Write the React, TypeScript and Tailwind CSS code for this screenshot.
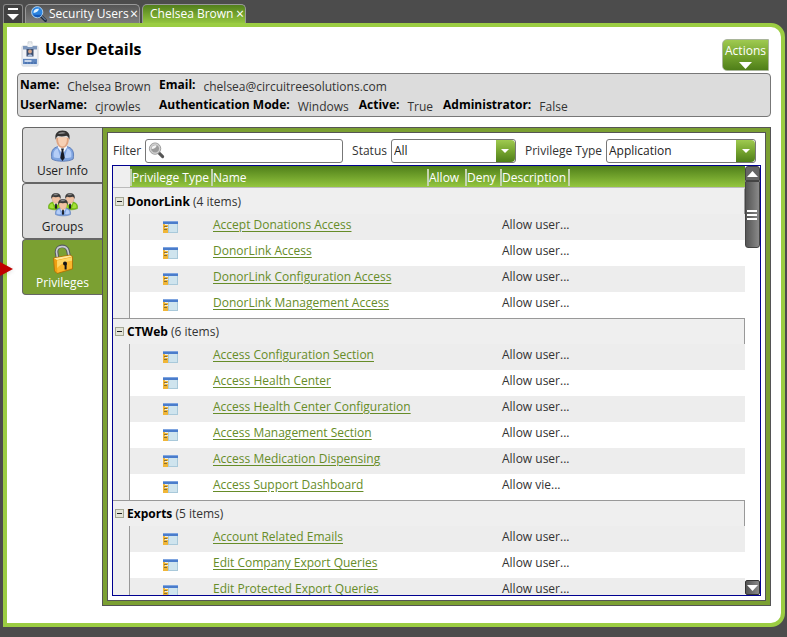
import { useState, type ReactNode } from "react";

type Group = { name: string; count: number; items: [string, string][] };

const groups: Group[] = [
  {
    name: "DonorLink",
    count: 4,
    items: [
      ["Accept Donations Access", "Allow user..."],
      ["DonorLink Access", "Allow user..."],
      ["DonorLink Configuration Access", "Allow user..."],
      ["DonorLink Management Access", "Allow user..."],
    ],
  },
  {
    name: "CTWeb",
    count: 6,
    items: [
      ["Access Configuration Section", "Allow user..."],
      ["Access Health Center", "Allow user..."],
      ["Access Health Center Configuration", "Allow user..."],
      ["Access Management Section", "Allow user..."],
      ["Access Medication Dispensing", "Allow user..."],
      ["Access Support Dashboard", "Allow vie..."],
    ],
  },
  {
    name: "Exports",
    count: 5,
    items: [
      ["Account Related Emails", "Allow user..."],
      ["Edit Company Export Queries", "Allow user..."],
      ["Edit Protected Export Queries", "Allow user..."],
    ],
  },
];

function BlueLens() {
  return (
    <svg className="shrink-0" width="16" height="16" viewBox="0 0 16 16" aria-hidden="true">
      <path d="M10 10l4.500 4.500" stroke="#1e2c40" strokeWidth="3" strokeLinecap="round" />
      <path d="M10 9.500l4.500 4.500" stroke="#8fa6bf" strokeWidth="1" strokeLinecap="round" />
      <circle cx="6.200" cy="6.200" r="5.600" fill="#2b84e0" stroke="#bcd9f3" strokeWidth=".9" />
      <path d="M2 8.500a5 5 0 0 0 8.500.5C8 8.500 5 9 2 8.500z" fill="#1557b5" />
      <path d="M2.500 7c-.3-3 2-4.800 5.500-4.200-.6 2.400-2.600 3.900-5.500 4.200z" fill="#dff3ff" />
    </svg>
  );
}

function GrayLens() {
  return (
    <svg className="shrink-0" width="17" height="17" viewBox="0 0 18 18" aria-hidden="true">
      <path d="M11 11l4.500 4.500" stroke="#555" strokeWidth="3.200" strokeLinecap="round" />
      <circle cx="7.500" cy="7" r="6" fill="#c9c9c9" stroke="#9a9a9a" strokeWidth="1" />
      <circle cx="7.500" cy="7" r="4.700" fill="#9b9b9b" stroke="#e2e2e2" strokeWidth=".8" />
      <path d="M3.800 7.500c-.2-2.800 2-4.600 5.400-3.900-.6 2.300-2.500 3.700-5.400 3.900z" fill="#f4f4f4" />
    </svg>
  );
}

function BadgeIcon() {
  return (
    <svg width="18" height="26" viewBox="0 0 18 26" aria-hidden="true">
      <rect x="1" y="5" width="16" height="20" rx="1" fill="#f1f3f7" stroke="#cfd3d9" />
      <path d="M1.500 17h15v7.500h-15z" fill="#dbe4f0" />
      <path d="M7 4V.8h4V4" fill="#eceef0" stroke="#c9cdd2" strokeWidth=".8" />
      <path d="M2 5h14v3.500H2z" fill="#7d97bd" />
      <path d="M6.500 3h5v3h-5z" fill="#edf0f4" />
      <rect x="5.500" y="8" width="7" height="7.500" fill="#3c4f70" />
      <circle cx="9" cy="10.500" r="1.900" fill="#d6a78b" />
      <path d="M6.500 15.500c0-3 5-3 5 0z" fill="#a9bddd" />
      <rect x="2" y="18" width="14" height="5" fill="#5f86bf" />
      <path d="M3.500 20h7" stroke="#e8eff8" strokeWidth="1.500" />
      <path d="M4 22h11" stroke="#3e67a5" strokeDasharray="2 1" />
    </svg>
  );
}

function Person({ body, dark, light }: { body: string; dark: string; light: string }) {
  return (
    <g>
      <path d="M1 30c-1.500-8 1-12 7-13h8c6 1 8.500 5 7 13-5 3-17 3-22 0z" fill={body} stroke={dark} strokeWidth=".8" />
      <path d="M3 28c-.8-5 .5-8 4-9l3 9.500c-3 .6-5 .3-7-.5zM21 28c.8-5-.5-8-4-9l-3 9.500c3 .6 5 .3 7-.5z" fill={light} />
      <path d="M7 17.500L12 25l5-7.500-2-2.500H9z" fill="#f4f8ff" />
      <path d="M10.500 19h3l-.6 2.500L14.300 29 12 32l-2.300-3 1.400-7.500z" fill="#171b26" />
      <path d="M5.500 8C5 14 8 18.500 12 18.500S19 14 18.500 8z" fill="#dfa582" />
      <path d="M7.500 7.500C7 14 9.500 17 12 17s5-3 4.500-9.500z" fill="#f6d0b4" />
      <path d="M5 10C3.600 4 6.500.5 12 .5S20.400 4 19 10c-.8-2.500-1.500-3.400-3-4-3 1-6 1-8.500.3C6 7 5.600 8 5 10z" fill="#333" />
      <path d="M7.500 4C9 1.800 12.500 1.300 15.500 3 13 4 10 4.400 7.500 4z" fill="#858585" />
    </g>
  );
}

function UserIcon() {
  return (
    <svg width="25" height="32" viewBox="0 0 24 33" aria-hidden="true">
      <Person body="#7fa4e0" dark="#4f70b0" light="#b4cdf7" />
    </svg>
  );
}

function GroupMember({ x, y, body, dark, light }: { x: number; y: number; body: string; dark: string; light: string }) {
  return (
    <g transform={`translate(${x} ${y})`}>
      <path d="M-7.500 14.500c-.5-4 1.500-6 4.500-6.500h6c3 .5 5 2.500 4.500 6.500-3 1.800-12 1.800-15 0z" fill={body} stroke={dark} strokeWidth=".5" />
      <path d="M-6.500 13.500c-.2-2.500 1-4 3-4l1.500 4.500c-1.600.3-3.300.2-4.500-.5zM6.500 13.500c.2-2.500-1-4-3-4L2 14c1.600.3 3.300.2 4.500-.5z" fill={light} />
      <path d="M-3 8.500L0 12.500l3-4z" fill="#f4f8ff" />
      <path d="M-.8 9.500H.8L1 14l-1 1.300L-1 14z" fill="#171b26" />
      <path d="M-4 3c0 4 1.500 6.500 4 6.500S4 7 4 3z" fill="#f0c2a3" stroke="#c98f6d" strokeWidth=".4" />
      <path d="M-4.500 5C-5.500 1 -3.500-.8 0-.8S5.500 1 4.500 5C4.200 3.600 3.600 3 2.800 2.700c-2 .6-4 .6-5.600.1C-3.700 3.200-4.200 3.800-4.500 5z" fill="#3a3a3a" />
      <path d="M-3 1.200C-2 0 .5-.3 2.500.7 1 1.400-1.500 1.500-3 1.200z" fill="#8a8a8a" />
    </g>
  );
}

function GroupIcon() {
  return (
    <svg width="30" height="26" viewBox="0 0 30 26" aria-hidden="true">
      <GroupMember x={8} y={2} body="#78c010" dark="#5b9a10" light="#a5e03a" />
      <GroupMember x={22} y={2} body="#78c010" dark="#5b9a10" light="#a5e03a" />
      <GroupMember x={15} y={8} body="#7fa4e0" dark="#4f70b0" light="#b4cdf7" />
    </svg>
  );
}

function LockIcon() {
  return (
    <svg width="22" height="30" viewBox="0 0 22 30" aria-hidden="true">
      <path d="M5.500 14L4.500 8c0-7 10-8 11.500-1l1 5" fill="none" stroke="#565a60" strokeWidth="3.600" />
      <path d="M5.500 14L4.500 8c0-6.500 10-7.500 11.500-1l1 5" fill="none" stroke="#c9ccd1" strokeWidth="1.600" />
      <path d="M1.500 14L18 11l2.500 1.500v12.500L5 29.500 2.500 27z" fill="#ee9f12" stroke="#a86d07" strokeWidth=".8" />
      <path d="M2 14.300L18 11.600l2 1.200L5 16z" fill="#ffe899" />
      <path d="M5 16.500l15-3.200V24L5.300 28.800z" fill="#fbb72d" />
      <path d="M5 16.500l15-3.200v3.500C14 17 9 20 5.200 24z" fill="#ffd765" />
      <circle cx="13" cy="19.500" r="2" fill="#151515" />
      <path d="M12.600 20h2v5.500h-2z" fill="#151515" />
    </svg>
  );
}

function WindowIcon() {
  return (
    <svg className="mx-auto block" width="15" height="12" viewBox="0 0 15 12" aria-hidden="true">
      <rect width="15" height="12" fill="#cfe4ee" />
      <rect width="15" height="3" fill="#4a7ccb" />
      <path d="M0 .5h15" stroke="#7fa5e0" />
      <rect y="3" width="5" height="9" fill="#f0b638" />
      <path d="M2 3.500h3M2 6.500h3" stroke="#e9edf0" />
      <path d="M1 5.500h3M1 8.500h3" stroke="#8a6f32" />
      <path d="M5.500 3v9M14.500 3v9M5 11.500h10" stroke="#a9c9da" />
    </svg>
  );
}

function Triangle({ up = false, w = 10, h = 5 }: { up?: boolean; w?: number; h?: number }) {
  return (
    <svg width={w} height={h} viewBox="0 0 10 5" preserveAspectRatio="none" aria-hidden="true">
      <path d={up ? "M0 5h10L5 0z" : "M0 0h10L5 5z"} fill="#fff" />
    </svg>
  );
}

function Dropdown({ id, label, options, className }: { id: string; label: string; options: string[]; className: string }) {
  return (
    <div className="flex shrink-0 items-center gap-1">
      <label htmlFor={id} className="whitespace-nowrap">{label}</label>
      <div className={`relative h-6 ${className}`}>
        <select
          id={id}
          className="h-full w-full appearance-none rounded-[3px] border border-[#777] bg-white pr-6 pl-0.5 text-[#222]"
        >
          {options.map((o) => (
            <option key={o}>{o}</option>
          ))}
        </select>
        <span className="pointer-events-none absolute inset-y-px right-px flex w-[19px] items-center justify-center rounded-r-sm bg-linear-to-b from-[#9fca50] via-[#76a52f] to-[#4f7f19]">
          <Triangle w={8} h={4} />
        </span>
      </div>
    </div>
  );
}

function Field({ label, children }: { label: string; children: ReactNode }) {
  return (
    <div className="flex gap-2">
      <dt className="font-bold text-black">{label}</dt>
      <dd className="pt-0.5">{children}</dd>
    </div>
  );
}

function SideTab({ label, active = false, children }: { label: string; active?: boolean; children: ReactNode }) {
  return (
    <button
      role="tab"
      aria-selected={active}
      className={`flex h-14 w-full flex-col items-center justify-end rounded-l-[4px] border border-r-0 border-[#666] pb-0.5 leading-[18px] ${
        active ? "bg-[#7ba032] text-white" : "bg-[#dcdcdc] text-[#222]"
      }`}
    >
      {children}
      {label}
    </button>
  );
}

function HeaderCell({ children }: { children?: ReactNode }) {
  return (
    <th className="border-b border-[#bbb] bg-linear-to-b from-[#4f7f19] to-[#94c63f] p-0 pt-0.5 text-left font-normal text-white">
      <span className="block h-[17px] border-l-2 border-[#c5d3b0] leading-[18px] whitespace-nowrap">{children}</span>
    </th>
  );
}

function PrivilegeGroup({ group }: { group: Group }) {
  const [open, setOpen] = useState(true);
  return (
    <tbody className="group">
      <tr className="h-[26px]">
        <th colSpan={7} className="border-t border-r border-[#999] bg-[#efefef] p-0 text-left font-normal group-first-of-type:border-t-[#efefef]">
          <div className="flex items-center gap-[3px] pl-0.5">
            <button
              aria-label={`Toggle ${group.name}`}
              onClick={() => setOpen(!open)}
              className="flex size-[9px] items-center justify-center border border-[#a3a795] bg-[#e4e4d8]"
            >
              <span className="h-px w-[5px] bg-[#222]" />
            </button>
            <span>
              <b className="text-black">{group.name}</b> ({group.count} items)
            </span>
          </div>
        </th>
      </tr>
      {open &&
        group.items.map(([name, description]) => (
          <tr key={name} className="h-[26px] even:bg-[#ededed]">
            <td className="border-r border-[#999] bg-[#efefef] p-0" />
            <td className="p-0 pb-px">
              <WindowIcon />
            </td>
            <td className="p-0 pb-1 pl-0.5">
              <a href="#" className="text-[#668c28] underline underline-offset-2">
                {name}
              </a>
            </td>
            <td className="p-0" />
            <td className="p-0" />
            <td className="p-0 pb-1 pl-0.5 whitespace-nowrap">{description}</td>
            <td className="p-0" />
          </tr>
        ))}
    </tbody>
  );
}

export default function App() {
  return (
    <div className="relative flex h-screen flex-col overflow-hidden bg-[#4c4c4c] pr-0.5 pb-2.5 pl-[3px] font-['Open_Sans','Noto_Sans',sans-serif] text-[12px] leading-4 text-[#333]">
      <nav className="flex h-[23px] shrink-0 items-end gap-0.5">
        <button
          aria-label="Tab list"
          className="flex h-[19px] w-5 flex-col items-center justify-center gap-1 rounded-t-[3px] border border-b-0 border-[#888] bg-[#414141]"
        >
          <span className="h-0.5 w-2.5 bg-white" />
          <Triangle w={12} h={6} />
        </button>
        <div className="flex h-[19px] w-[115px] items-center rounded-t-[5px] border border-b-0 border-[#999] bg-linear-to-b from-[#555] to-[#7d7d7d] pl-[5px] text-white">
          <BlueLens />
          <a href="#" className="ml-0.5 grow whitespace-nowrap">Security Users</a>
          <button aria-label="Close Security Users" className="w-2.5 text-[14px]">×</button>
        </div>
        <div className="flex h-[19px] w-[104px] items-center rounded-t-[5px] border border-b-0 border-[#999] bg-linear-to-b from-[#527f1c] to-[#94c63f] pl-[7px] text-white">
          <a href="#" className="grow whitespace-nowrap">Chelsea Brown</a>
          <button aria-label="Close Chelsea Brown" className="w-2.5 text-[14px]">×</button>
        </div>
      </nav>

      <main className="flex min-h-0 grow flex-col rounded-r-[14px] border-4 border-[#9bcd42] bg-white px-2.5 pt-3 pb-[17px]">
        <header className="flex h-[34px] shrink-0 items-start gap-1.5 pl-1">
          <span className="pt-0.5">
            <BadgeIcon />
          </span>
          <h1 className="grow text-[16px] leading-5 font-bold text-black">User Details</h1>
          <button className="mr-0.5 flex h-8 w-[47px] flex-col items-center gap-[3px] rounded-l-[5px] border border-[#a9b59a] bg-linear-to-b from-[#9fca50] via-[#76a52f] to-[#4f7f19] pt-[3px] text-white">
            Actions
            <Triangle w={13} h={7} />
          </button>
        </header>

        <dl className="h-11 shrink-0 rounded-[4px] border border-[#777] bg-[#dcdcdc] px-0.5 pt-[3px]">
          <div className="flex h-5">
            <div className="w-[139px] shrink-0">
              <Field label="Name:">Chelsea Brown</Field>
            </div>
            <Field label="Email:">chelsea@circuitreesolutions.com</Field>
          </div>
          <div className="flex h-5 gap-2.5">
            <div className="w-[129px] shrink-0">
              <Field label="UserName:">cjrowles</Field>
            </div>
            <Field label="Authentication Mode:">Windows</Field>
            <Field label="Active:">True</Field>
            <Field label="Administrator:">False</Field>
          </div>
        </dl>

        <div className="mt-2.5 flex min-h-0 grow pl-[5px]">
          <div role="tablist" className="w-20 shrink-0">
            <SideTab label="User Info">
              <UserIcon />
            </SideTab>
            <SideTab label="Groups">
              <GroupIcon />
            </SideTab>
            <SideTab label="Privileges" active>
              <LockIcon />
            </SideTab>
          </div>

          <section className="flex min-w-0 grow border border-[#555] bg-[#7ba032] p-1">
            <div className="flex min-w-0 grow flex-col border border-[#555] bg-white p-1 pt-[3px]">
              <div className="flex h-[29px] shrink-0 items-center gap-[9px] pl-px">
                <div className="flex min-w-0 grow items-center gap-1">
                  <label htmlFor="filter">Filter</label>
                  <div className="flex h-6 min-w-0 grow items-center rounded-[3px] border border-[#777] pl-0.5">
                    <GrayLens />
                    <input id="filter" className="min-w-0 grow outline-none" />
                  </div>
                </div>
                <Dropdown id="status" label="Status" options={["All", "Allowed", "Denied"]} className="w-[125px]" />
                <Dropdown id="type" label="Privilege Type" options={["Application", "Report"]} className="mr-[5px] w-[150px]" />
              </div>

              <div className="flex min-h-0 grow overflow-hidden border border-[#000090]">
                <div className="min-w-0 grow overflow-hidden">
                  <table className="w-full table-fixed border-separate border-spacing-0">
                    <colgroup>
                      <col className="w-[17px]" />
                      <col className="w-[81px]" />
                      <col className="w-[216px]" />
                      <col className="w-[38px]" />
                      <col className="w-[35px]" />
                      <col className="w-[68px]" />
                      <col />
                    </colgroup>
                    <thead>
                      <tr className="h-[22px]">
                        <td className="border-b border-[#bbb] bg-[#efefef] p-0" />
                        <HeaderCell>Privilege Type</HeaderCell>
                        <HeaderCell>Name</HeaderCell>
                        <HeaderCell>Allow</HeaderCell>
                        <HeaderCell>Deny</HeaderCell>
                        <HeaderCell>Description</HeaderCell>
                        <HeaderCell />
                      </tr>
                    </thead>
                    {groups.map((g) => (
                      <PrivilegeGroup key={g.name} group={g} />
                    ))}
                  </table>
                </div>
                <div className="flex w-[15px] shrink-0 flex-col bg-white">
                  <button
                    aria-label="Scroll up"
                    className="flex h-[15px] shrink-0 items-center justify-center rounded-t-[3px] border border-[#444] bg-[#666]"
                  >
                    <Triangle up w={11} h={6} />
                  </button>
                  <div className="flex h-[67px] shrink-0 flex-col items-center justify-center gap-0.5 rounded-b-[3px] border border-[#444] bg-linear-to-r from-[#555] to-[#8a8a8a]">
                    <span className="h-0.5 w-2.5 bg-white" />
                    <span className="h-0.5 w-2.5 bg-white" />
                    <span className="h-0.5 w-2.5 bg-white" />
                  </div>
                  <button
                    aria-label="Scroll down"
                    className="mt-auto flex h-[15px] shrink-0 items-center justify-center rounded-[2px] border border-[#333] bg-linear-to-r from-[#555] to-[#8a8a8a]"
                  >
                    <Triangle w={11} h={6} />
                  </button>
                </div>
              </div>
            </div>
          </section>
        </div>
      </main>

      <svg className="absolute top-[261px] left-0 drop-shadow-sm" width="14" height="16" viewBox="0 0 14 16" aria-hidden="true">
        <path d="M0 1l13 7-13 7z" fill="#c00000" />
      </svg>
    </div>
  );
}
